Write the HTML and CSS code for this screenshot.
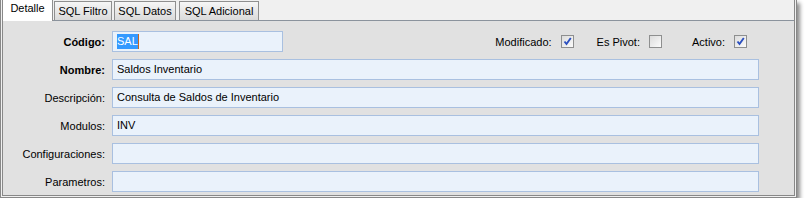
FILE: index.html
```html
<!DOCTYPE html>
<html lang="es">
<head>
    <meta charset="UTF-8">
    <title>Detalle</title>
    <link rel="stylesheet" href="styles.css">
</head>
<body>
    <div class="frame">
        <div class="tabs">
            <div class="tab tab-active">Detalle</div>
            <div class="tab tab-filtro">SQL Filtro</div>
            <div class="tab tab-datos">SQL Datos</div>
            <div class="tab tab-adicional">SQL Adicional</div>
        </div>
        <div class="panel">
            <div class="row">
                <label class="lbl lbl-bold">Código:</label>
                <div class="field field-short"><span class="sel">SAL</span><span class="caret"></span></div>
                <div class="checks">
                    <div class="check">
                        <span>Modificado:</span>
                        <span class="box"><svg width="11" height="11" viewBox="0 0 11 11"><path d="M2.5 5.5 L4.5 8 L8.8 2" fill="none" stroke="#2b4fbf" stroke-width="1.9"/></svg></span>
                    </div>
                    <div class="check check-pivot">
                        <span>Es Pivot:</span>
                        <span class="box"></span>
                    </div>
                    <div class="check check-activo">
                        <span>Activo:</span>
                        <span class="box"><svg width="11" height="11" viewBox="0 0 11 11"><path d="M2.5 5.5 L4.5 8 L8.8 2" fill="none" stroke="#2b4fbf" stroke-width="1.9"/></svg></span>
                    </div>
                </div>
            </div>
            <div class="row">
                <label class="lbl lbl-bold">Nombre:</label>
                <div class="field">Saldos Inventario</div>
            </div>
            <div class="row">
                <label class="lbl">Descripción:</label>
                <div class="field">Consulta de Saldos de Inventario</div>
            </div>
            <div class="row">
                <label class="lbl">Modulos:</label>
                <div class="field">INV</div>
            </div>
            <div class="row">
                <label class="lbl">Configuraciones:</label>
                <div class="field"></div>
            </div>
            <div class="row">
                <label class="lbl">Parametros:</label>
                <div class="field"></div>
            </div>
        </div>
    </div>
</body>
</html>
```

FILE: styles.css
```css
body{
    margin: 0;
    background-color: #fff;
    font-family: "Liberation Sans", Arial, sans-serif;
    font-size: 11px;
    color: #000;
}
.frame{
    width: 791px;
    height: 195px;
    background-color: #f0f0f0;
    border-left: 3px double #888;
    border-right: 3px double #888;
    border-bottom: 3px double #888;
    box-shadow: 3px 3px 4px rgba(0,0,0,0.45);
}
.tabs{
    display: flex;
    align-items: flex-end;
    height: 20px;
    border-bottom: 1px solid #8b939d;
}
.tab{
    box-sizing: border-box;
    height: 19px;
    margin-left: 2px;
    border: 1px solid #8f8f8f;
    border-bottom: none;
    background: linear-gradient(#f6f6f6, #dadada);
    text-align: center;
    line-height: 18px;
}
.tab-active{
    width: 50px;
    height: 21px;
    margin-left: 0;
    margin-bottom: -1px;
    border: none;
    border-right: 1px solid #8f8f8f;
    background: #fff;
    line-height: 17px;
}
.tab-filtro{
    width: 58px;
    margin-left: 1px;
}
.tab-datos{
    width: 62px;
}
.tab-adicional{
    width: 80px;
    margin-left: 3px;
}
.panel{
    height: 174px;
    box-sizing: border-box;
    padding-top: 10px;
    background-color: #e1e1e1;
    display: flex;
    flex-direction: column;
    gap: 7px;
}
.row{
    display: flex;
    align-items: center;
    height: 21px;
}
.lbl{
    width: 102px;
    margin-right: 7px;
    text-align: right;
}
.lbl-bold{
    font-weight: bold;
}
.field{
    box-sizing: border-box;
    width: 647px;
    height: 21px;
    padding-left: 4px;
    border: 1px solid #a9c0e0;
    background-color: #eaf2fb;
    line-height: 19px;
    display: flex;
    align-items: center;
}
.field-short{
    width: 171px;
}
.sel{
    background-color: #3399ff;
    color: #fff;
    line-height: 15px;
}
.caret{
    width: 1px;
    height: 15px;
    background-color: #c8661e;
}
.checks{
    display: flex;
    margin-left: auto;
    margin-right: 47px;
}
.check{
    display: flex;
    align-items: center;
    gap: 9px;
}
.check-pivot{
    margin-left: 23px;
}
.check-activo{
    margin-left: 30px;
}
.box{
    box-sizing: border-box;
    width: 13px;
    height: 13px;
    border: 1px solid #8e8f8f;
    background: linear-gradient(135deg, #dcdcdc, #fbfbfb);
    display: flex;
    align-items: center;
    justify-content: center;
}
```
